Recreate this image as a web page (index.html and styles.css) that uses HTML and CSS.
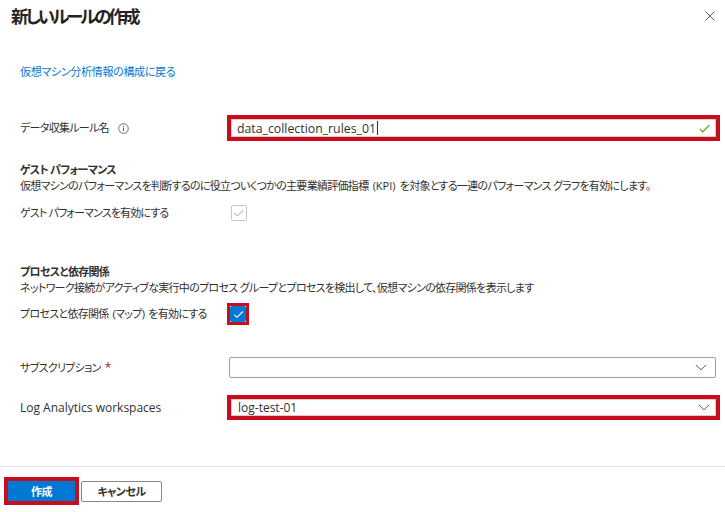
FILE: index.html
```html
<!DOCTYPE html>
<html lang="ja">
<head>
    <meta charset="UTF-8">
    <meta name="viewport" content="width=device-width, initial-scale=1.0">
    <title>新しいルールの作成</title>
    <link rel="stylesheet" href="styles.css">
</head>
<body>
    <div class="panel">
        <div class="panel-header">
            <h1 class="panel-title">新しいルールの作成</h1>
            <a href="#" class="panel-close" aria-label="閉じる">
                <svg width="10" height="10" viewBox="0 0 10 10"><path d="M0.5 0.5 L9.5 9.5 M9.5 0.5 L0.5 9.5" stroke="#605e5c" stroke-width="1" fill="none"/></svg>
            </a>
        </div>

        <div class="panel-body">
            <a href="#" class="back-link">仮想マシン分析情報の構成に戻る</a>

            <div class="field field-name">
                <label class="field-label jp">データ収集ルール名
                    <svg class="info-icon" width="11" height="11" viewBox="0 0 11 11"><circle cx="5.5" cy="5.5" r="4.8" stroke="#605e5c" stroke-width="0.9" fill="none"/><path d="M5.5 4.6 V8" stroke="#605e5c" stroke-width="1"/><circle cx="5.5" cy="3.2" r="0.6" fill="#605e5c"/></svg>
                </label>
                <div class="mark">
                    <div class="text-box">
                        <span class="text-value">data_collection_rules_01</span><span class="caret"></span>
                        <svg class="valid-icon" width="11" height="9" viewBox="0 0 11 9"><path d="M0.8 4.8 L3.8 7.8 L10.2 1.2" stroke="#57a300" stroke-width="1.2" fill="none"/></svg>
                    </div>
                </div>
            </div>

            <div class="section section-guest">
                <div class="section-title jp">ゲスト パフォーマンス</div>
                <div class="section-desc jp">仮想マシンのパフォーマンスを判断するのに役立ついくつかの主要業績評価指標 <span class="latin">(KPI)</span> を対象とする一連のパフォーマンス グラフを有効にします。</div>
                <div class="field field-check">
                    <label class="field-label jp">ゲスト パフォーマンスを有効にする</label>
                    <span class="checkbox disabled">
                        <svg width="12" height="10" viewBox="0 0 12 10"><path d="M1.5 5 L4.5 8 L10.5 2" stroke="#a19f9d" stroke-width="1" fill="none"/></svg>
                    </span>
                </div>
            </div>

            <div class="section section-process">
                <div class="section-title jp">プロセスと依存関係</div>
                <div class="section-desc jp">ネットワーク接続がアクティブな実行中のプロセス グループとプロセスを検出して、仮想マシンの依存関係を表示します</div>
                <div class="field field-check">
                    <label class="field-label jp">プロセスと依存関係<span class="paren">(マップ)</span>を有効にする</label>
                    <span class="mark mark-small">
                        <span class="checkbox checked">
                            <svg width="11" height="9" viewBox="0 0 11 9"><path d="M1.2 4.6 L4 7.3 L9.8 1.5" stroke="#fff" stroke-width="1.1" fill="none"/></svg>
                        </span>
                    </span>
                </div>
            </div>

            <div class="field field-sub">
                <label class="field-label jp">サブスクリプション <span class="required">*</span></label>
                <div class="dropdown">
                    <span class="dropdown-value"></span>
                    <svg class="chevron" width="12" height="7" viewBox="0 0 12 7"><path d="M0.8 0.8 L6 5.8 L11.2 0.8" stroke="#605e5c" stroke-width="1" fill="none"/></svg>
                </div>
            </div>

            <div class="field field-workspace">
                <label class="field-label">Log Analytics workspaces</label>
                <div class="mark">
                    <div class="dropdown dropdown-inner">
                        <span class="dropdown-value">log-test-01</span>
                        <svg class="chevron" width="12" height="7" viewBox="0 0 12 7"><path d="M0.8 0.8 L6 5.8 L11.2 0.8" stroke="#605e5c" stroke-width="1" fill="none"/></svg>
                    </div>
                </div>
            </div>
        </div>

        <div class="panel-footer">
            <span class="mark mark-btn"><button class="btn btn-primary">作成</button></span>
            <button class="btn btn-default">キャンセル</button>
        </div>
    </div>
</body>
</html>
```

FILE: styles.css
```css
body {
    margin: 0;
    background-color: #fff;
    color: #323130;
    font-family: "Open Sans", "Noto Sans CJK JP", sans-serif;
    font-size: 12px;
    font-feature-settings: "palt";
}
.panel {
    width: 725px;
    height: 512px;
    overflow: hidden;
}
.panel-header {
    height: 32px;
    display: flex;
    justify-content: space-between;
    align-items: center;
    padding: 0 10px 0 11px;
}
.panel-title {
    margin: 0;
    font-size: 17.5px;
    line-height: 32px;
    font-weight: 600;
    letter-spacing: -3px;
    color: #252423;
    white-space: nowrap;
}
.panel-close {
    display: flex;
}
.panel-body {
    padding: 0 5px 0 20px;
}
.jp {
    font-size: 11px;
    letter-spacing: -0.7px;
    white-space: nowrap;
}
.latin {
    letter-spacing: 0;
    margin: 0 2px;
}
.paren {
    margin: 0 4px;
}
.back-link {
    display: block;
    margin-top: 32px;
    line-height: 16px;
    font-size: 11px;
    letter-spacing: -0.3px;
    color: #0078d4;
    text-decoration: none;
}
.field {
    display: grid;
    grid-template-columns: 207px 1fr;
    align-items: center;
}
.field-label {
    display: flex;
    align-items: center;
    line-height: 16px;
    white-space: nowrap;
}
.info-icon {
    margin-left: 9px;
}
.required {
    color: #a4262c;
    margin-left: 4px;
    font-size: 12px;
}

/* red annotation boxes */
.mark {
    border: 4px solid #c50f1f;
    background-color: #fff;
}
.mark-small {
    border-width: 3px;
    display: inline-flex;
    justify-self: start;
}
.mark-btn {
    display: inline-flex;
}

.field-name {
    margin-top: 35px;
}
.text-box {
    height: 16px;
    border: 1px solid #e9c3c6;
    display: flex;
    align-items: center;
    padding: 0 5px 0 5px;
}
.text-value {
    font-size: 12.3px;
}
.caret {
    width: 1px;
    height: 14px;
    background-color: #323130;
    margin-left: 1px;
}
.valid-icon {
    margin-left: auto;
}

.section-guest {
    margin-top: 21px;
}
.section-process {
    margin-top: 43px;
}
.section-title {
    font-weight: 700;
    line-height: 16px;
}
.section-desc {
    line-height: 16px;
}
.section-guest .field-check {
    margin-top: 11px;
}
.section-process .field-check {
    margin-top: 7px;
}
.section-guest .field-label {
    letter-spacing: -0.85px;
}
.checkbox {
    width: 14px;
    height: 14px;
    border: 1px solid #c8c6c4;
    border-radius: 2px;
    display: inline-flex;
    align-items: center;
    justify-content: center;
    justify-self: start;
}
.checkbox.disabled {
    margin-left: 4px;
    background-color: #fff;
}
.checkbox.checked {
    border-color: #0078d4;
    background-color: #0078d4;
}

.field-sub {
    margin-top: 32px;
}
.dropdown {
    height: 19px;
    border: 1px solid #a19f9d;
    border-radius: 2px;
    display: flex;
    align-items: center;
    padding: 0 8px 0 6px;
    margin: 0 4px 0 2px;
}
.dropdown-inner {
    height: 15px;
    margin: 0;
    border-color: #e9c3c6;
    border-radius: 0;
    padding: 0 5px 0 6px;
}
.dropdown-value {
    font-size: 12px;
}
.chevron {
    margin-left: auto;
}
.field-workspace {
    margin-top: 17px;
}

.panel-footer {
    margin-top: 46px;
    border-top: 1px solid #e1dfdd;
    padding: 10px 0 0 4px;
    display: flex;
    align-items: center;
}
.btn {
    font-family: "Open Sans", "Noto Sans CJK JP", sans-serif;
    font-feature-settings: "palt";
    font-size: 11px;
    font-weight: 700;
    letter-spacing: -0.5px;
    border-radius: 2px;
    padding: 0;
}
.btn-primary {
    width: 67px;
    height: 20px;
    border: none;
    border-radius: 0;
    background-color: #0078d4;
    color: #fff;
}
.btn-default {
    width: 81px;
    height: 21px;
    margin-left: 2px;
    border: 1px solid #8a8886;
    background-color: #fff;
    color: #323130;
}
```
